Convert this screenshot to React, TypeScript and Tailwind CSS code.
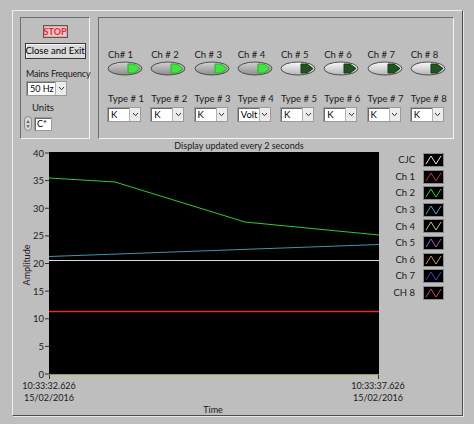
import React from 'react';

const channels = [
  { label: 'Ch# 1', on: true, type: 'K' },
  { label: 'Ch # 2', on: true, type: 'K' },
  { label: 'Ch # 3', on: true, type: 'K' },
  { label: 'Ch # 4', on: true, type: 'Volt' },
  { label: 'Ch # 5', on: false, type: 'K' },
  { label: 'Ch # 6', on: false, type: 'K' },
  { label: 'Ch # 7', on: false, type: 'K' },
  { label: 'Ch # 8', on: false, type: 'K' },
];

const legend = [
  { name: 'CJC', color: '#e8e8e8' },
  { name: 'Ch 1', color: '#c03838' },
  { name: 'Ch 2', color: '#2fd62f' },
  { name: 'Ch 3', color: '#4aa6c8' },
  { name: 'Ch 4', color: '#c8c864' },
  { name: 'Ch 5', color: '#a060c8' },
  { name: 'Ch 6', color: '#c8a030' },
  { name: 'Ch 7', color: '#3848c8' },
  { name: 'CH 8', color: '#c84878' },
];

const yTicks = [40, 35, 30, 25, 20, 15, 10, 5, 0];
const yOf = (v: number) => 374 - v * 5.525;

const Chevron = () => (
  <svg width="7" height="5" viewBox="0 0 7 5">
    <path d="M1 1 L3.5 3.8 L6 1" fill="none" stroke="#333" strokeWidth="1" />
  </svg>
);

const Dropdown = ({ value, w, arrow }: { value: string; w: string; arrow: string }) => (
  <div className={`flex h-[15px] ${w} border border-[#9a9a9a] bg-white shadow-[inset_1px_1px_0_#6a6a6a]`}>
    <div className="flex-1 overflow-hidden whitespace-nowrap pl-[3px] leading-[13px] text-black">{value}</div>
    <div className={`${arrow} flex items-center justify-center border-l border-[#b0b0b0] bg-[#ececec]`}>
      <Chevron />
    </div>
  </div>
);

const Led = ({ on }: { on: boolean }) => {
  const id = on ? 'ledOn' : 'ledOff';
  return (
    <svg width="36" height="15" viewBox="0 0 36 15">
      <defs>
        <linearGradient id={id} x1="0" y1="0" x2="0" y2="1">
          <stop offset="0" stopColor={on ? '#d2d2d2' : '#fafafa'} />
          <stop offset="1" stopColor={on ? '#8c8c8c' : '#b4b4b4'} />
        </linearGradient>
      </defs>
      <ellipse cx="18" cy="7.5" rx="17" ry="6.5" fill={`url(#${id})`} stroke="#4e4e4e" strokeWidth="1" />
      <path
        d="M21 3 L27 3 L33 7.5 L27 12 L21 12 Z"
        fill={on ? '#3fe63f' : '#1e5420'}
        stroke={on ? '#2cb02c' : '#143a14'}
        strokeWidth="1"
        strokeLinejoin="round"
      />
    </svg>
  );
};

const Swatch = ({ color }: { color: string }) => (
  <div className="h-[14px] w-[21px] border border-[#8a8a8a] bg-black">
    <svg width="19" height="12" viewBox="0 0 19 12">
      <path d="M2 10 L7 2 L12 10 L17 2" fill="none" stroke={color} strokeWidth="1" />
    </svg>
  </div>
);

const Chart = () => (
  <svg width={372} height={276} viewBox="13 139 372 276" className="shrink-0 overflow-visible">
    <text x={239} y={149} textAnchor="middle" fontSize="9" fill="#1a1a1a">
      Display updated every 2 seconds
    </text>
    <rect x={49} y={152} width={330} height={223} fill="#000" />
    {yTicks.map((v) => (
      <g key={v}>
        <line x1={45} x2={49} y1={yOf(v)} y2={yOf(v)} stroke="#333" />
        <text x={44} y={yOf(v) + 3.5} textAnchor="end" fontSize="9.5" fill="#222">
          {v}
        </text>
      </g>
    ))}
    <line x1={49.5} x2={49.5} y1={375} y2={379} stroke="#333" />
    <line x1={378.5} x2={378.5} y1={375} y2={379} stroke="#333" />
    <line x1={49} x2={379} y1={260.5} y2={260.5} stroke="#dcdcdc" />
    <line x1={49} x2={379} y1={311.5} y2={311.5} stroke="#e82c2c" strokeWidth="1.4" />
    <line x1={49} x2={379} y1={374.5} y2={374.5} stroke="#9a9a4a" />
    <polyline points="49,256.5 200,251 379,244.5" fill="none" stroke="#3f94b8" />
    <polyline points="49,178 115,182 245,222 379,235" fill="none" stroke="#2ecc2e" />
    <text transform="translate(30,265) rotate(-90)" textAnchor="middle" fontSize="9" fill="#1a1a1a">
      Amplitude
    </text>
    <text x={49} y={389} textAnchor="middle" fontSize="9" fill="#1a1a1a">10:33:32.626</text>
    <text x={49} y={401} textAnchor="middle" fontSize="9" fill="#1a1a1a">15/02/2016</text>
    <text x={378} y={389} textAnchor="middle" fontSize="9" fill="#1a1a1a">10:33:37.626</text>
    <text x={378} y={401} textAnchor="middle" fontSize="9" fill="#1a1a1a">15/02/2016</text>
    <text x={213} y={413} textAnchor="middle" fontSize="9" fill="#1a1a1a">Time</text>
  </svg>
);

export default function App() {
  return (
    <div className="h-[424px] w-[474px] overflow-hidden bg-[#bebebe] pl-[12px] pt-[10px] font-['Lato',sans-serif] text-[9px] text-[#1a1a1a]">
      <div className="flex h-[406px] w-[451px] flex-col border-t border-l border-t-[#eeeeee] border-l-[#eeeeee] border-r border-b border-r-[#4c4c4c] border-b-[#4c4c4c] shadow-[1px_1px_0_#e6e6e6]">
        {/* controls */}
        <div className="flex h-[128px] shrink-0 pl-[7px] pt-[6px]">
          <div className="flex h-[122px] w-[70px] flex-col items-center border-t border-l border-t-[#6e6e6e] border-l-[#6e6e6e] border-r border-b border-r-[#f4f4f4] border-b-[#f4f4f4]">
            <div className="mt-[7px] flex h-[13px] w-[25px] items-center justify-center border border-[#5a5a5a] bg-[#f2c8cc] text-[9px] font-bold leading-none text-[#e8242c] shadow-[inset_0_0_0_1px_#e8a0a8]">
              STOP
            </div>
            <div className="mt-[5px] flex h-[16px] w-[61px] items-center justify-center whitespace-nowrap border border-[#3a3a3a] bg-[#dadada] text-[9.5px] leading-none text-black shadow-[inset_1px_1px_0_#f6f6f6]">
              Close and Exit
            </div>
            <div className="mt-[9px] w-full whitespace-nowrap pl-[5px] text-[9px] leading-[12px] tracking-[-0.2px]">Mains Frequency</div>
            <div className="mt-[1px] w-full pl-[5px]">
              <Dropdown value="50 Hz" w="w-[41px]" arrow="w-[11px]" />
            </div>
            <div className="mt-[6px] w-full pl-[11px] text-[9.5px] leading-[12px]">Units</div>
            <div className="mt-[2px] flex w-full items-center gap-[2px] pl-[3px]">
              <div className="flex h-[15px] w-[8px] flex-col items-center justify-center rounded-[4px] border border-[#8a8a8a] bg-[#d6d6d6] text-[5px] leading-[5px] text-[#555]">
                <span>▲</span>
                <span>▼</span>
              </div>
              <div className="h-[14px] w-[18px] border border-[#9a9a9a] bg-white pl-[2px] leading-[12px] text-black shadow-[inset_1px_1px_0_#6a6a6a]">
                C*
              </div>
            </div>
          </div>

          <div className="ml-[8px] flex h-[122px] w-[356px] border-t border-l border-t-[#6e6e6e] border-l-[#6e6e6e] border-r border-b border-r-[#f4f4f4] border-b-[#f4f4f4] pl-[8px] pt-[31px] text-[9.5px]">
            {channels.map((c, i) => (
              <div key={i} className="flex w-[43.4px] flex-col">
                <div className="whitespace-nowrap pl-[1px] leading-[12px]">{c.label}</div>
                <div className="h-[15px]">
                  <Led on={c.on} />
                </div>
                <div className="mt-[17px] whitespace-nowrap pl-[1px] leading-[12px]">Type # {i + 1}</div>
                <div className="mt-[2px]">
                  <Dropdown value={c.type} w="w-[34px]" arrow="w-[11px]" />
                </div>
              </div>
            ))}
          </div>
        </div>

        {/* chart */}
        <div className="flex h-[276px] items-start">
          <Chart />
          <div className="flex flex-col gap-[2.6px] pt-[14px] text-[9.5px]">
            {legend.map((l) => (
              <div key={l.name} className="flex h-[14px] items-center">
                <div className="w-[31px] pr-[1px] text-right leading-none">{l.name}</div>
                <div className="ml-[7px]">
                  <Swatch color={l.color} />
                </div>
              </div>
            ))}
          </div>
        </div>
      </div>
    </div>
  );
}
